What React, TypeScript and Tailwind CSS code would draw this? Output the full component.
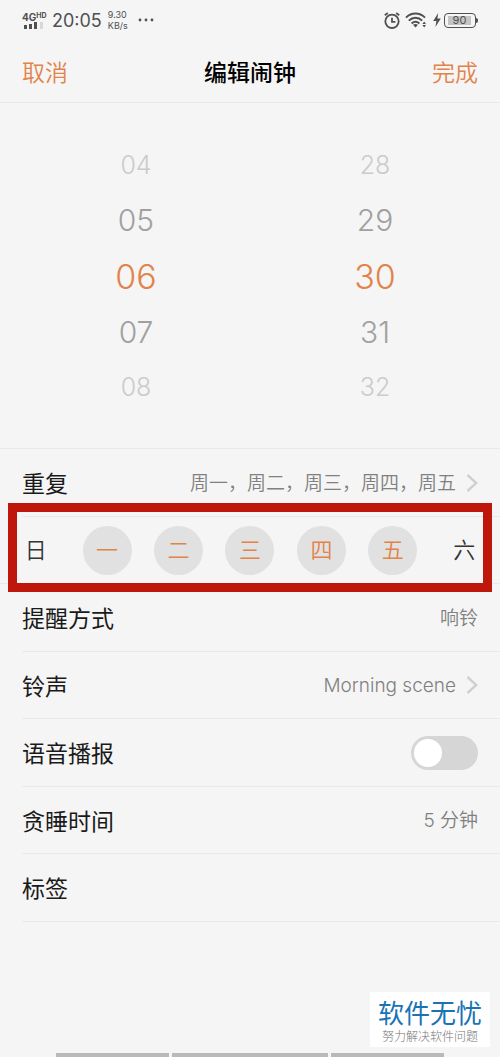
import { useState } from 'react'

const hours = ['04', '05', '06', '07', '08']
const minutes = ['28', '29', '30', '31', '32']
const week = ['日', '一', '二', '三', '四', '五', '六']

// look of each wheel position, from top to bottom
const wheel = [
  'h-[55px] text-[25px] text-[#cbcbcb]',
  'h-[55px] text-[30px] text-[#a0a0a0]',
  'h-[57px] text-[34px] text-[#e2834a]',
  'h-[55px] text-[30px] text-[#a0a0a0]',
  'h-[55px] text-[25px] text-[#cbcbcb]',
]

function Wheel({ label, values }: { label: string; values: string[] }) {
  return (
    <ul role="listbox" aria-label={label} className="font-[350]">
      {values.map((value, i) => (
        <li key={value} role="option" aria-selected={i === 2} className={`flex items-center justify-center ${wheel[i]}`}>
          {value}
        </li>
      ))}
    </ul>
  )
}

function Chevron() {
  return (
    <svg width="12" height="18" viewBox="0 0 12 18" fill="none" stroke="#d0d0d0" strokeWidth="2.4" className="ml-[10px]">
      <path d="M1.5 1L10.2 9L1.5 17" />
    </svg>
  )
}

function Row({ label, value, arrow }: { label: string; value?: string; arrow?: boolean }) {
  return (
    <li className="pl-[22px] odd:h-[68px] even:h-[67px]">
      <button type="button" className="flex h-full w-full items-center justify-between border-b border-[#e9e9e9] pr-[22px] text-left">
        <span className="font-['Noto_Sans_CJK_SC',sans-serif] text-[23px] text-[#1a1a1a]">{label}</span>
        <span className="flex items-center text-[19px] font-[350] text-[#808080]">
          <span className="pt-[3px]">{value}</span>
          {arrow && <Chevron />}
        </span>
      </button>
    </li>
  )
}

function StatusBar() {
  return (
    <div className="flex h-10 items-center justify-between px-[22px] text-[#505050]">
      <div className="flex items-center">
        <div className="w-6">
          <div className="flex items-start text-[10px] leading-[10px] font-bold">
            4G<span className="text-[7px] leading-[7px]">HD</span>
          </div>
          <svg width="22" height="7" viewBox="0 0 22 7" fill="#505050">
            <rect x="2" y="3" width="3" height="4" />
            <rect x="7" y="2" width="3" height="5" />
            <rect x="12" y="0" width="3" height="7" />
            <rect x="18" y="0" width="3" height="7" fill="#d8d8d8" />
          </svg>
        </div>
        <span className="ml-[6px] text-[18px]">20:05</span>
        <span className="ml-[6px] flex flex-col text-[9px] leading-[11px]">
          <span>9.30</span>
          <span>KB/s</span>
        </span>
        <svg width="16" height="4" viewBox="0 0 16 4" fill="#505050" className="ml-[10px]">
          <circle cx="2" cy="2" r="1.4" />
          <circle cx="8" cy="2" r="1.4" />
          <circle cx="14" cy="2" r="1.4" />
        </svg>
      </div>
      <div className="flex items-center">
        <svg width="16" height="17" viewBox="0 0 16 17" fill="none" stroke="#505050" strokeWidth="1.8">
          <circle cx="8" cy="9.3" r="6.7" />
          <path d="M8 5.8V9.8H11.4" />
          <path d="M0.8 3.2L3.8 1M15.2 3.2L12.2 1" />
        </svg>
        <svg width="22" height="16" viewBox="0 0 22 16" fill="none" stroke="#505050" strokeWidth="2" className="ml-[5px]">
          <path d="M1 5.6C6.5 0.2 14.5 0.2 20 5.6" />
          <path d="M3.8 8.6C7.8 4.8 13.2 4.8 17.2 8.6" />
          <path d="M6.6 11.5C9 9.3 12 9.3 14.4 11.5" />
          <path d="M8 12.8Q10.5 11 13 12.8L10.5 15.5Z" fill="#505050" stroke="none" />
          <path d="M17.4 12L19.2 9.6L21 12ZM17.4 13L19.2 15.4L21 13Z" fill="#505050" stroke="none" />
        </svg>
        <svg width="8" height="14" viewBox="0 0 8 14" fill="#505050" className="ml-[6px]">
          <path d="M5.2 0L0.2 8H3.4L2.4 14L7.8 5.6H4.4Z" />
        </svg>
        <div className="ml-[3px] flex h-[15px] w-8 items-center rounded-[4px] border border-[#505050] py-[2px] pr-1 pl-[3px]">
          <span className="flex h-full w-full items-center justify-center bg-[#c4c4c4] text-[11px] leading-[11px]">90</span>
        </div>
        <span className="h-[5px] w-[2px] rounded-r-sm bg-[#505050]" />
      </div>
    </div>
  )
}

export default function App() {
  const [days, setDays] = useState([1, 2, 3, 4, 5])
  const [voice, setVoice] = useState(false)

  const toggleDay = (i: number) => setDays(days.includes(i) ? days.filter((d) => d !== i) : [...days, i])

  return (
    <div className="relative flex min-h-screen flex-col bg-[#f5f5f5] font-[Inter,'Noto_Sans_CJK_SC',sans-serif]">
      <StatusBar />
      <header className="flex h-[63px] items-center justify-between border-b border-[#e9e9e9] px-[22px] font-['Noto_Sans_CJK_SC',sans-serif] text-[23px]">
        <button type="button" className="font-[350] text-[#e2834a]">取消</button>
        <h1 className="font-medium text-black">编辑闹钟</h1>
        <button type="button" className="font-[350] text-[#e2834a]">完成</button>
      </header>

      <div className="grid grid-cols-2 border-b border-[#e9e9e9] pt-[35px] pb-[33px]">
        <div className="pl-[22px]">
          <Wheel label="时" values={hours} />
        </div>
        <Wheel label="分" values={minutes} />
      </div>

      <ul>
        <Row label="重复" value="周一，周二，周三，周四，周五" arrow />
        <li className="relative odd:h-[68px] even:h-[67px]">
          <div className="grid h-full grid-cols-7 items-center justify-items-center border-b border-[#e9e9e9]">
            {week.map((day, i) => (
              <button
                key={day}
                type="button"
                aria-pressed={days.includes(i)}
                onClick={() => toggleDay(i)}
                className={`size-[49px] rounded-full text-[22px] font-[350] ${days.includes(i) ? 'bg-[#e1e1e1] text-[#e2834a]' : 'text-[#333]'}`}
              >
                {day}
              </button>
            ))}
          </div>
          <div className="pointer-events-none absolute inset-x-2 -top-[14px] -bottom-2 border-[9px] border-[#bd180b]" />
        </li>
        <Row label="提醒方式" value="响铃" />
        <Row label="铃声" value="Morning scene" arrow />
        <li className="pl-[22px] odd:h-[68px] even:h-[67px]">
          <label className="flex h-full items-center justify-between border-b border-[#e9e9e9] pr-[22px]">
            <span className="font-['Noto_Sans_CJK_SC',sans-serif] text-[23px] text-[#1a1a1a]">语音播报</span>
            <input
              type="checkbox"
              role="switch"
              checked={voice}
              onChange={(e) => setVoice(e.target.checked)}
              className="flex h-[34px] w-[67px] appearance-none items-center rounded-full bg-[#d6d6d6] px-[3px] before:size-7 before:rounded-full before:bg-white checked:justify-end checked:bg-[#e2834a]"
            />
          </label>
        </li>
        <Row label="贪睡时间" value="5 分钟" />
        <Row label="标签" />
      </ul>

      <div className="mt-auto flex justify-center gap-[3px] px-14">
        <span className="h-1 flex-[113] bg-[#b9b9b9]" />
        <span className="h-1 flex-[156] bg-[#b9b9b9]" />
        <span className="h-1 flex-[113] bg-[#b9b9b9]" />
      </div>

      <div className="absolute right-[10px] bottom-[10px] flex h-[55px] w-[120px] flex-col items-center justify-center bg-white pt-[3px]">
        <span className="text-[26px] leading-[32px] text-[#1a73b5]">软件无忧</span>
        <span className="text-[12px] leading-[14px] font-light text-[#777]">努力解决软件问题</span>
      </div>
    </div>
  )
}
